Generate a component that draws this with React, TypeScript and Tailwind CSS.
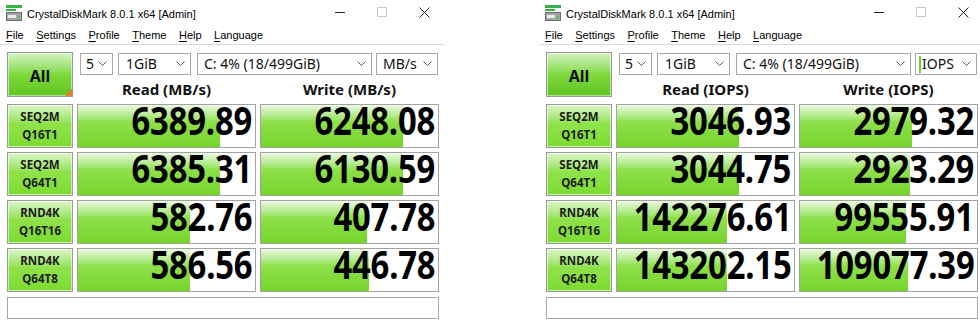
import React from "react";

type Row = {
  l1: string;
  l2: string;
  read: string;
  readPct: number;
  write: string;
  writePct: number;
};

const mbRows: Row[] = [
  { l1: "SEQ2M", l2: "Q16T1", read: "6389.89", readPct: 80.5, write: "6248.08", writePct: 80 },
  { l1: "SEQ2M", l2: "Q64T1", read: "6385.31", readPct: 80.5, write: "6130.59", writePct: 80 },
  { l1: "RND4K", l2: "Q16T16", read: "582.76", readPct: 63, write: "407.78", writePct: 60 },
  { l1: "RND4K", l2: "Q64T8", read: "586.56", readPct: 63, write: "446.78", writePct: 61 },
];

const iopsRows: Row[] = [
  { l1: "SEQ2M", l2: "Q16T1", read: "3046.93", readPct: 69, write: "2979.32", writePct: 63 },
  { l1: "SEQ2M", l2: "Q64T1", read: "3044.75", readPct: 69, write: "2923.29", writePct: 62 },
  { l1: "RND4K", l2: "Q16T16", read: "142276.61", readPct: 62, write: "99555.91", writePct: 60 },
  { l1: "RND4K", l2: "Q64T8", read: "143202.15", readPct: 62, write: "109077.39", writePct: 61 },
];

function AppIcon() {
  return (
    <svg width="16" height="16" viewBox="0 0 16 16">
      <rect x="0" y="0" width="16" height="3" fill="#3aae48" />
      <rect x="0" y="4" width="10" height="2" fill="#3aae48" />
      <rect x="0.5" y="7.5" width="15" height="8" fill="#a3a3a3" stroke="#6e6e6e" />
      <rect x="2" y="10" width="8" height="3" fill="#ececec" />
      <rect x="12" y="11" width="2" height="2" fill="#46c84a" />
    </svg>
  );
}

function Chevron() {
  return (
    <svg width="9" height="6" viewBox="0 0 9 6" className="shrink-0">
      <polyline points="0.5,0.5 4.5,4.5 8.5,0.5" fill="none" stroke="#5a5a5a" strokeWidth="1" />
    </svg>
  );
}

function Select({ className, children }: { className: string; children: React.ReactNode }) {
  return (
    <div
      className={
        "flex h-[22px] shrink-0 items-center justify-between border border-[#a8a8a8] bg-white pr-[5px] text-[14px] leading-none text-[#111] " +
        className
      }
    >
      {children}
      <Chevron />
    </div>
  );
}

function ValueCell({ value, pct }: { value: string; pct: number }) {
  return (
    <div className="relative flex items-start justify-end overflow-hidden border border-[#a3a3a3] bg-white pr-[3px]">
      <div
        className="absolute inset-y-0 left-0 bg-linear-to-b from-[#ecf9e2] via-[#8fe04a] via-40% to-[#74d428]"
        style={{ width: `${pct}%` }}
      />
      <span className="relative origin-right scale-x-[0.82] text-[40px] font-bold leading-[30px] tracking-[-0.2px] text-black">
        {value}
      </span>
    </div>
  );
}

function LabelButton({ l1, l2 }: { l1: string; l2: string }) {
  return (
    <div className="flex flex-col items-center justify-center border border-[#9b9b9b] bg-linear-to-b from-[#dcf6c6] via-[#8fe24a] via-45% to-[#7cdb2e] text-[11.5px] font-bold leading-[18px] text-[#1c1c1c] shadow-[inset_0_0_0_1px_rgba(255,255,255,0.55)]">
      <span>{l1}</span>
      <span>{l2}</span>
    </div>
  );
}

function Mnemonic({ first, rest }: { first: string; rest: string }) {
  return (
    <span>
      <span className="underline underline-offset-[2px]">{first}</span>
      {rest}
    </span>
  );
}

function CrystalWindow({
  readLabel,
  writeLabel,
  unit,
  rows,
  corner,
  marker,
}: {
  readLabel: string;
  writeLabel: string;
  unit: string;
  rows: Row[];
  corner?: boolean;
  marker?: boolean;
}) {
  return (
    <div className="w-[445px] shrink-0 bg-white">
      {/* title bar */}
      <div className="flex h-[28px] items-center">
        <div className="ml-[6px] mt-[-2px] flex">
          <AppIcon />
        </div>
        <span className="ml-[5px] font-['Liberation_Sans',sans-serif] text-[11px] text-black">
          CrystalDiskMark 8.0.1 x64 [Admin]
        </span>
        <div className="ml-auto flex h-full">
          <div className="flex w-[42px] items-center justify-center pb-[4px]">
            <div className="h-px w-[10px] bg-[#222]" />
          </div>
          <div className="flex w-[42px] items-center justify-center pb-[4px]">
            <div className="h-[10px] w-[10px] border border-[#c9c9c9]" />
          </div>
          <div className="flex w-[42px] items-center justify-center pb-[4px]">
            <svg width="11" height="11" viewBox="0 0 11 11">
              <path d="M0.5 0.5 L10.5 10.5 M10.5 0.5 L0.5 10.5" stroke="#222" strokeWidth="1" />
            </svg>
          </div>
        </div>
      </div>

      {/* menu */}
      <div className="flex h-[17px] items-center gap-[12.5px] border-b border-[#d9d9d9] pb-[1px] pl-[6px] font-['Liberation_Sans',sans-serif] text-[11px] text-black">
        <Mnemonic first="F" rest="ile" />
        <Mnemonic first="S" rest="ettings" />
        <Mnemonic first="P" rest="rofile" />
        <Mnemonic first="T" rest="heme" />
        <Mnemonic first="H" rest="elp" />
        <Mnemonic first="L" rest="anguage" />
      </div>

      <div className="px-[7px] pt-[7px]">
        {/* controls + headers */}
        <div className="flex">
          <div className="relative flex h-[45px] w-[66px] shrink-0 items-center justify-center border border-[#9b9b9b] bg-linear-to-b from-[#d6f3c0] via-[#80d93c] via-50% to-[#5ec520] pt-[2px] text-[16px] font-bold text-[#111] shadow-[inset_0_0_0_1px_rgba(255,255,255,0.5)]">
            All
            {corner && (
              <div className="absolute bottom-0 right-0 h-0 w-0 border-b-[7px] border-l-[7px] border-b-[#f07c1c] border-l-transparent" />
            )}
          </div>
          <div className="ml-[4px] flex flex-col">
            <div className="ml-[3px] mt-[1px] flex">
              <Select className="w-[33px] pl-[5px]">5</Select>
              <Select className="ml-[5px] w-[73px] pl-[7px]">1GiB</Select>
              <Select className="ml-[6px] w-[175px] pl-[6px]">C: 4% (18/499GiB)</Select>
              <Select className={marker ? "ml-[4px] w-[62px] pl-[3px]" : "ml-[4px] w-[62px] pl-[6px]"}>
                <span className="flex items-center">
                  {marker && <span className="mr-[1px] h-[17px] w-[2px] bg-[#6ad12f]" />}
                  {unit}
                </span>
              </Select>
            </div>
            <div className="mt-[4px] grid grid-cols-[179px_179px] gap-x-[4px] text-center text-[15px] font-bold leading-[20px] text-[#111]">
              <span>{readLabel}</span>
              <span>{writeLabel}</span>
            </div>
          </div>
        </div>

        {/* results */}
        <div className="mt-[5px] grid auto-rows-[44px] grid-cols-[66px_179px_179px] gap-x-[4px] gap-y-[4px]">
          {rows.map((r, i) => (
            <React.Fragment key={i}>
              <LabelButton l1={r.l1} l2={r.l2} />
              <ValueCell value={r.read} pct={r.readPct} />
              <ValueCell value={r.write} pct={r.writePct} />
            </React.Fragment>
          ))}
        </div>

        {/* comment box */}
        <div className="mt-[5px] h-[22px] w-[432px] border border-[#a8a8a8] bg-white" />
      </div>
    </div>
  );
}

export default function App() {
  return (
    <div className="flex h-[320px] w-[980px] overflow-hidden bg-white font-['Noto_Sans',sans-serif]">
      <CrystalWindow readLabel="Read (MB/s)" writeLabel="Write (MB/s)" unit="MB/s" rows={mbRows} corner />
      <div className="ml-[94px] flex">
        <CrystalWindow readLabel="Read (IOPS)" writeLabel="Write (IOPS)" unit="IOPS" rows={iopsRows} marker />
      </div>
    </div>
  );
}
